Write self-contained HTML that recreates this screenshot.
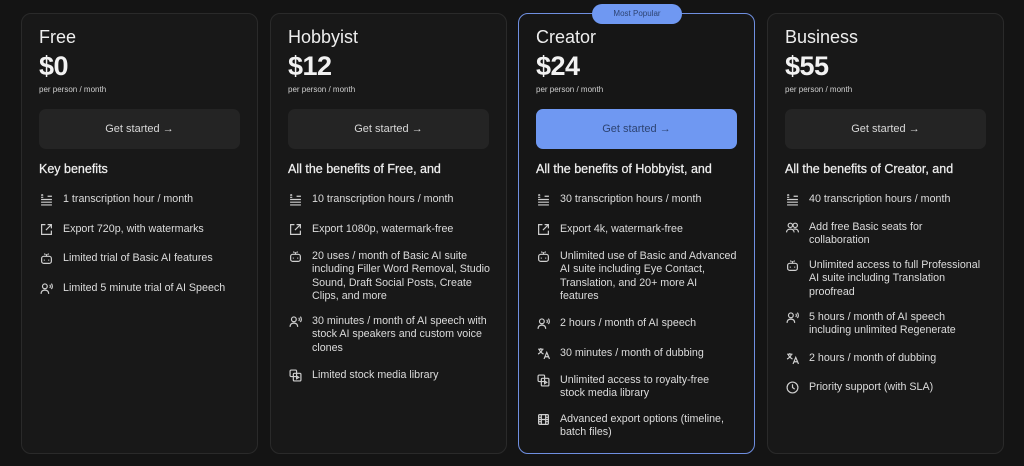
<!DOCTYPE html>
<html><head><meta charset="utf-8">
<style>
*{margin:0;padding:0;box-sizing:border-box}
body{width:1024px;height:466px;background:#141414;font-family:"Liberation Sans",sans-serif;color:#e6e6e6;position:relative;overflow:hidden}
.card{position:absolute;top:13px;width:237px;height:441px;background:#181818;border:1px solid #2a2a2a;border-radius:10px;padding:0 17px}
.card.pop{border-color:#6f8fe0;background:#161616}
.t{position:absolute;left:17px;top:13px;font-size:18px;color:#eee}
.p{position:absolute;left:17px;top:37px;font-size:27px;font-weight:bold;color:#f2f2f2;letter-spacing:-0.5px}
.pp{position:absolute;left:17px;top:71px;font-size:8px;color:#cfcfcf}
.btn{position:absolute;left:17px;top:95px;width:201px;height:40px;border-radius:7px;background:#242424;font-size:11px;color:#d8d8d8;text-align:center;line-height:40px}
.pop .btn{background:#6f98f2;color:#2d4372}
.h{position:absolute;left:17px;top:148px;font-size:12.5px;color:#eee;-webkit-text-stroke:0.25px #eee}
ul{position:absolute;left:17px;top:177px;width:215px;list-style:none}
li{position:relative;display:flex;align-items:center;padding-left:24px;font-size:10.7px;line-height:13.3px;min-height:17.5px;color:#dcdcdc;margin-bottom:12px;white-space:nowrap}
li svg{position:absolute;left:1px;top:2px;width:13px;height:13px;fill:none;stroke:#cfcfcf;stroke-width:1.1}
li.m svg{top:0}
.badge{position:absolute;left:73px;top:-10px;width:90px;height:20px;border-radius:10px;background:#6f98f2;color:#2d4372;font-size:8px;text-align:center;line-height:20px}
</style></head><body>
<svg width="0" height="0" style="position:absolute">
<defs>
<symbol id="tr" viewBox="0 0 12 12"><path d="M1 2h2M1 4h2M2 1v1M7 3h4M1 6h10M1 8.5h10M1 11h10"/></symbol>
<symbol id="ex" viewBox="0 0 12 12"><path d="M5 1.5H1.5v9h9V7M7 1.5h3.5V5M10.5 1.5L5.5 6.5"/></symbol>
<symbol id="ai" viewBox="0 0 12 12"><rect x="1.5" y="4" width="9" height="6.5" rx="2"/><path d="M4 7v1M8 7v1M6 4V2M4 1.5l1 1M8 1.5l-1 1"/></symbol>
<symbol id="sp" viewBox="0 0 12 12"><circle cx="4.5" cy="4" r="2.2"/><path d="M1 11c0-2.5 1.5-3.5 3.5-3.5S8 8.5 8 11M9 2.5c.7.8.7 2.2 0 3M10.5 1.5c1.2 1.4 1.2 3.6 0 5"/></symbol>
<symbol id="md" viewBox="0 0 12 12"><rect x="1" y="1" width="6" height="6" rx="1"/><rect x="4" y="4" width="7" height="7" rx="1"/><path d="M7 6.5l2 1.2-2 1.2z"/></symbol>
<symbol id="db" viewBox="0 0 12 12"><path d="M1 2h5M3.5 1v1M2 2c.5 2 2 3.5 4 4.5M5 2c-.5 2-2 3.5-4 4.5M6.5 11l2.5-6 2.5 6M7.3 9h3.4"/></symbol>
<symbol id="fl" viewBox="0 0 12 12"><rect x="1.5" y="1.5" width="9" height="9" rx="1"/><path d="M4 1.5v9M8 1.5v9M1.5 6h9M1.5 4h2.5M1.5 8h2.5M8 4h2.5M8 8h2.5"/></symbol>
<symbol id="us" viewBox="0 0 12 12"><circle cx="4" cy="4" r="2"/><circle cx="8.5" cy="4" r="2"/><path d="M.5 10.5c0-2 1.5-3 3.5-3s3.5 1 3.5 3M7 7.5c2.5-.5 4.5.5 4.5 3"/></symbol>
<symbol id="ck" viewBox="0 0 12 12"><circle cx="6" cy="6" r="5"/><path d="M6 3v3l2 1.5"/></symbol>
</defs></svg>

<div class="card" style="left:21px">
<div class="t">Free</div><div class="p">$0</div><div class="pp">per person / month</div>
<div class="btn">Get started →</div>
<div class="h">Key benefits</div>
<ul>
<li><svg><use href="#tr"/></svg><span>1 transcription hour / month</span></li>
<li><svg><use href="#ex"/></svg><span>Export 720p, with watermarks</span></li>
<li><svg><use href="#ai"/></svg><span>Limited trial of Basic AI features</span></li>
<li><svg><use href="#sp"/></svg><span>Limited 5 minute trial of AI Speech</span></li>
</ul></div>

<div class="card" style="left:270px">
<div class="t">Hobbyist</div><div class="p">$12</div><div class="pp">per person / month</div>
<div class="btn">Get started →</div>
<div class="h">All the benefits of Free, and</div>
<ul>
<li><svg><use href="#tr"/></svg><span>10 transcription hours / month</span></li>
<li><svg><use href="#ex"/></svg><span>Export 1080p, watermark-free</span></li>
<li class="m"><svg><use href="#ai"/></svg><span>20 uses / month of Basic AI suite<br>including Filler Word Removal, Studio<br>Sound, Draft Social Posts, Create<br>Clips, and more</span></li>
<li class="m"><svg><use href="#sp"/></svg><span>30 minutes / month of AI speech with<br>stock AI speakers and custom voice<br>clones</span></li>
<li><svg><use href="#md"/></svg><span>Limited stock media library</span></li>
</ul></div>

<div class="card pop" style="left:518px">
<div class="badge">Most Popular</div>
<div class="t">Creator</div><div class="p">$24</div><div class="pp">per person / month</div>
<div class="btn">Get started →</div>
<div class="h">All the benefits of Hobbyist, and</div>
<ul>
<li><svg><use href="#tr"/></svg><span>30 transcription hours / month</span></li>
<li><svg><use href="#ex"/></svg><span>Export 4k, watermark-free</span></li>
<li class="m"><svg><use href="#ai"/></svg><span>Unlimited use of Basic and Advanced<br>AI suite including Eye Contact,<br>Translation, and 20+ more AI<br>features</span></li>
<li><svg><use href="#sp"/></svg><span>2 hours / month of AI speech</span></li>
<li><svg><use href="#db"/></svg><span>30 minutes / month of dubbing</span></li>
<li class="m"><svg><use href="#md"/></svg><span>Unlimited access to royalty-free<br>stock media library</span></li>
<li class="m"><svg><use href="#fl"/></svg><span>Advanced export options (timeline,<br>batch files)</span></li>
</ul></div>

<div class="card" style="left:767px">
<div class="t">Business</div><div class="p">$55</div><div class="pp">per person / month</div>
<div class="btn">Get started →</div>
<div class="h">All the benefits of Creator, and</div>
<ul>
<li><svg><use href="#tr"/></svg><span>40 transcription hours / month</span></li>
<li class="m"><svg><use href="#us"/></svg><span>Add free Basic seats for<br>collaboration</span></li>
<li class="m"><svg><use href="#ai"/></svg><span>Unlimited access to full Professional<br>AI suite including Translation<br>proofread</span></li>
<li class="m"><svg><use href="#sp"/></svg><span>5 hours / month of AI speech<br>including unlimited Regenerate</span></li>
<li><svg><use href="#db"/></svg><span>2 hours / month of dubbing</span></li>
<li><svg><use href="#ck"/></svg><span>Priority support (with SLA)</span></li>
</ul></div>
</body></html>
